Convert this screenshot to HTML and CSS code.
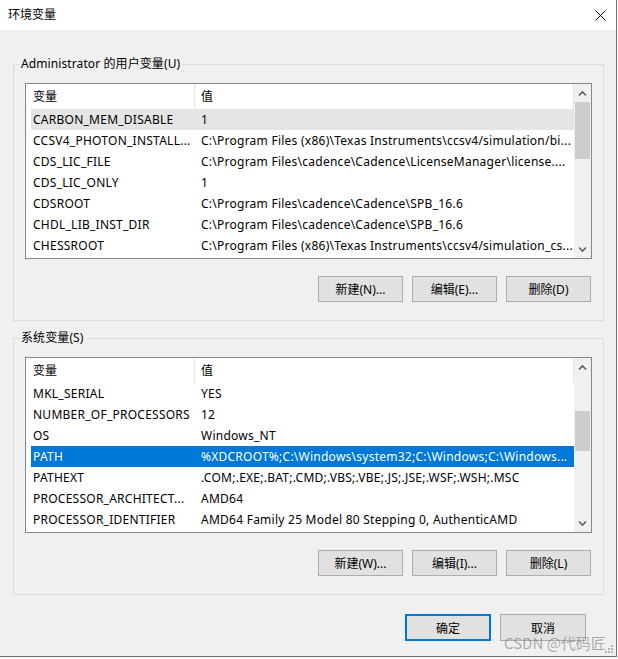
FILE: index.html
```html
<!DOCTYPE html>
<html lang="zh-CN">
<head>
  <meta charset="UTF-8">
  <meta name="viewport" content="width=device-width, initial-scale=1.0">
  <title>环境变量</title>
  <link rel="stylesheet" href="styles.css">
</head>
<body>
  <div class="dialog">
    <div class="titlebar">
      <span class="title">环境变量</span>
      <svg class="close" width="11" height="11" viewBox="0 0 11 11">
        <path d="M0.5 0.5 L10.5 10.5 M10.5 0.5 L0.5 10.5" stroke="#000" stroke-width="1" fill="none"/>
      </svg>
    </div>

    <div class="content">
      <fieldset class="group">
        <legend>Administrator 的用户变量(U)</legend>
        <div class="listview">
          <div class="lv-main">
            <div class="lv-header">
              <div class="hd-name">变量</div>
              <div class="hd-value">值</div>
            </div>
            <div class="lv-rows">
              <div class="row hot"><span class="c-name">CARBON_MEM_DISABLE</span><span class="c-value">1</span></div>
              <div class="row"><span class="c-name">CCSV4_PHOTON_INSTALL...</span><span class="c-value">C:\Program Files (x86)\Texas Instruments\ccsv4/simulation/bi...</span></div>
              <div class="row"><span class="c-name">CDS_LIC_FILE</span><span class="c-value">C:\Program Files\cadence\Cadence\LicenseManager\license....</span></div>
              <div class="row"><span class="c-name">CDS_LIC_ONLY</span><span class="c-value">1</span></div>
              <div class="row"><span class="c-name">CDSROOT</span><span class="c-value">C:\Program Files\cadence\Cadence\SPB_16.6</span></div>
              <div class="row"><span class="c-name">CHDL_LIB_INST_DIR</span><span class="c-value">C:\Program Files\cadence\Cadence\SPB_16.6</span></div>
              <div class="row"><span class="c-name">CHESSROOT</span><span class="c-value">C:\Program Files (x86)\Texas Instruments\ccsv4/simulation_cs...</span></div>
            </div>
          </div>
          <div class="scrollbar">
            <svg class="sb-arrow" width="17" height="17" viewBox="0 0 17 17"><path d="M5 11.5 L8.5 8 L12 11.5" stroke="#606060" stroke-width="1.6" fill="none"/></svg>
            <div class="sb-track"><div class="thumb thumb-user"></div></div>
            <svg class="sb-arrow" width="17" height="17" viewBox="0 0 17 17"><path d="M5 6.5 L8.5 10 L12 6.5" stroke="#606060" stroke-width="1.6" fill="none"/></svg>
          </div>
        </div>
        <div class="buttons">
          <button class="btn">新建(N)...</button>
          <button class="btn">编辑(E)...</button>
          <button class="btn">删除(D)</button>
        </div>
      </fieldset>

      <fieldset class="group system">
        <legend>系统变量(S)</legend>
        <div class="listview">
          <div class="lv-main">
            <div class="lv-header">
              <div class="hd-name">变量</div>
              <div class="hd-value">值</div>
            </div>
            <div class="lv-rows">
              <div class="row"><span class="c-name">MKL_SERIAL</span><span class="c-value">YES</span></div>
              <div class="row"><span class="c-name">NUMBER_OF_PROCESSORS</span><span class="c-value">12</span></div>
              <div class="row"><span class="c-name">OS</span><span class="c-value">Windows_NT</span></div>
              <div class="row selected"><span class="c-name">PATH</span><span class="c-value">%XDCROOT%;C:\Windows\system32;C:\Windows;C:\Windows...</span></div>
              <div class="row"><span class="c-name">PATHEXT</span><span class="c-value">.COM;.EXE;.BAT;.CMD;.VBS;.VBE;.JS;.JSE;.WSF;.WSH;.MSC</span></div>
              <div class="row"><span class="c-name">PROCESSOR_ARCHITECT...</span><span class="c-value">AMD64</span></div>
              <div class="row"><span class="c-name">PROCESSOR_IDENTIFIER</span><span class="c-value">AMD64 Family 25 Model 80 Stepping 0, AuthenticAMD</span></div>
            </div>
          </div>
          <div class="scrollbar">
            <svg class="sb-arrow" width="17" height="17" viewBox="0 0 17 17"><path d="M5 11.5 L8.5 8 L12 11.5" stroke="#606060" stroke-width="1.6" fill="none"/></svg>
            <div class="sb-track"><div class="thumb thumb-system"></div></div>
            <svg class="sb-arrow" width="17" height="17" viewBox="0 0 17 17"><path d="M5 6.5 L8.5 10 L12 6.5" stroke="#606060" stroke-width="1.6" fill="none"/></svg>
          </div>
        </div>
        <div class="buttons">
          <button class="btn">新建(W)...</button>
          <button class="btn">编辑(I)...</button>
          <button class="btn">删除(L)</button>
        </div>
      </fieldset>

      <div class="footer">
        <button class="btn btn-big default">确定</button>
        <button class="btn btn-big">取消</button>
      </div>
    </div>

    <div class="watermark">CSDN @代码匠</div>
    <svg class="grip" width="10" height="10" viewBox="0 0 10 10">
      <rect x="7" y="1" width="2" height="2" fill="#b4b4b4"/>
      <rect x="4" y="4" width="2" height="2" fill="#b4b4b4"/>
      <rect x="7" y="4" width="2" height="2" fill="#b4b4b4"/>
      <rect x="1" y="7" width="2" height="2" fill="#b4b4b4"/>
      <rect x="4" y="7" width="2" height="2" fill="#b4b4b4"/>
      <rect x="7" y="7" width="2" height="2" fill="#b4b4b4"/>
    </svg>
  </div>
</body>
</html>
```

FILE: styles.css
```css
body {
  margin: 0;
  background-color: #fff;
  font-family: "Noto Sans", "Noto Sans CJK SC", sans-serif;
  font-size: 12px;
  color: #000;
}

.dialog {
  position: relative;
  width: 616px;
  height: 656px;
  border-right: 1px solid #6e6e6e;
  border-bottom: 1px solid #6e6e6e;
  background-color: #f0f0f0;
}

.titlebar {
  display: flex;
  align-items: center;
  justify-content: space-between;
  height: 30px;
  padding: 0 10px 0 8px;
  background-color: #fff;
}

.title {
  line-height: 16px;
}

.content {
  padding: 26px 12px 0 13px;
}

.group {
  margin: 0;
  min-width: 0;
  padding: 11px 11px 18px 11px;
  border: 1px solid #dcdcdc;
}

.group.system {
  margin-top: 9px;
}

.group legend {
  margin-left: -6px;
  padding: 0 2px;
  line-height: 16px;
  letter-spacing: 0.1px;
}

.listview {
  display: flex;
  height: 174px;
  border: 1px solid #828790;
  background-color: #fff;
}

.lv-main {
  flex: 1;
  min-width: 0;
  overflow: hidden;
}

.lv-header {
  display: flex;
  height: 25px;
  line-height: 25px;
}

.hd-name {
  width: 161px;
  padding-left: 7px;
  border-right: 1px solid #e5e5e5;
}

.hd-value {
  flex: 1;
  padding-left: 6px;
  border-right: 1px solid #e5e5e5;
}

.lv-rows {
  padding-left: 5px;
  letter-spacing: 0.25px;
}

.row {
  display: flex;
  height: 21px;
  line-height: 21px;
  white-space: nowrap;
}

.row.hot {
  background-color: #e5e5e5;
}

.row.selected {
  background-color: #0078d7;
  color: #fff;
}

.c-name {
  width: 161px;
  padding-left: 2px;
  overflow: hidden;
}

.c-value {
  flex: 1;
  padding-left: 7px;
  overflow: hidden;
}

.scrollbar {
  display: flex;
  flex-direction: column;
  width: 17px;
  background-color: #f0f0f0;
}

.sb-arrow {
  display: block;
  flex: none;
}

.sb-track {
  flex: 1;
}

.thumb {
  margin: 0 1px;
  background-color: #cdcdcd;
}

.thumb-user {
  margin-top: 1px;
  height: 57px;
}

.thumb-system {
  margin-top: 36px;
  height: 40px;
}

.buttons {
  display: flex;
  justify-content: flex-end;
  gap: 9px;
  margin-top: 17px;
  padding-right: 1px;
}

.btn {
  width: 85px;
  height: 26px;
  padding: 0;
  border: 1px solid #adadad;
  background-color: #e1e1e1;
  font-family: inherit;
  font-size: 12px;
  color: #000;
}

.footer {
  display: flex;
  justify-content: flex-end;
  gap: 9px;
  margin-top: 19px;
  padding-right: 18px;
}

.btn-big {
  width: 86px;
  height: 27px;
}

.btn.default {
  border: 2px solid #0078d7;
}

.watermark {
  position: absolute;
  left: 504px;
  top: 634px;
  font-family: "Noto Sans CJK SC", sans-serif;
  font-size: 15px;
  line-height: 18px;
  color: rgba(110, 110, 110, 0.55);
}

.grip {
  position: absolute;
  right: 2px;
  bottom: 2px;
}
```
